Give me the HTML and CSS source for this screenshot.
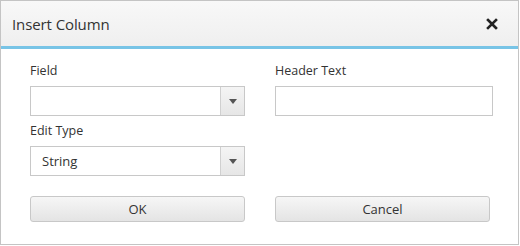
FILE: index.html
```html
<!DOCTYPE html>
<html>
<head>
<meta charset="utf-8">
<link rel="stylesheet" href="styles.css">
</head>
<body>
<div class="dialog">
  <div class="header">
    <span class="title">Insert Column</span>
    <span class="close">
      <svg width="12" height="12" viewBox="0 0 12 12"><path d="M2 2 L10 10 M10 2 L2 10" stroke="#222" stroke-width="2.6" stroke-linecap="square"/></svg>
    </span>
  </div>
  <div class="content">
    <div class="grid">
      <div class="group">
        <div class="label">Field</div>
        <div class="select"><span class="value"></span><span class="arrow"><i class="tri"></i></span></div>
      </div>
      <div class="group">
        <div class="label">Header Text</div>
        <div class="textbox"></div>
      </div>
      <div class="group second">
        <div class="label">Edit Type</div>
        <div class="select"><span class="value">String</span><span class="arrow"><i class="tri"></i></span></div>
      </div>
      <div class="group second"></div>
    </div>
    <div class="buttons">
      <button class="btn">OK</button>
      <button class="btn">Cancel</button>
    </div>
  </div>
</div>
</body>
</html>
```
FILE: styles.css
```css
* { box-sizing: border-box; }
body {
  margin: 0;
  font-family: "Open Sans", "Noto Sans", sans-serif;
  color: #333;
  background: #fff;
}
.dialog {
  width: 519px;
  height: 245px;
  border: 1px solid #c4c4c4;
  background: #fff;
}
.header {
  height: 48px;
  border-bottom: 3px solid #78c4e6;
  background: linear-gradient(#f8f8f8, #efefef);
  display: flex;
  align-items: center;
  justify-content: space-between;
  padding: 0 20px 0 11px;
}
.title {
  font-size: 15px;
  color: #333;
  letter-spacing: -0.1px;
}
.close {
  display: flex;
  width: 12px;
  height: 12px;
}
.content {
  padding: 13px 0 0 29px;
}
.grid {
  display: grid;
  grid-template-columns: 215px 218px;
  column-gap: 30px;
}
.group.second {
  margin-top: 6px;
}
.label {
  font-size: 12.5px;
  line-height: 18px;
  height: 18px;
  margin-bottom: 6px;
  color: #333;
}
.select, .textbox {
  height: 30px;
  border: 1px solid #c8c8c8;
  background: #fff;
  display: flex;
}
.select .value {
  flex: 1;
  font-size: 13px;
  line-height: 28px;
  padding-left: 11px;
  color: #333;
}
.select .arrow {
  width: 24px;
  border-left: 1px solid #d0d0d0;
  background: linear-gradient(#f4f4f4, #e6e6e6);
  display: flex;
  align-items: center;
  justify-content: center;
}
.tri {
  width: 0;
  height: 0;
  border-left: 4.5px solid transparent;
  border-right: 4.5px solid transparent;
  border-top: 5px solid #555;
}
.buttons {
  display: grid;
  grid-template-columns: 215px 215px;
  column-gap: 30px;
  margin-top: 20px;
}
.btn {
  height: 26px;
  border: 1px solid #c8c8c8;
  border-radius: 3px;
  background: linear-gradient(#f6f6f6, #e4e4e4);
  font-family: "Open Sans", "Noto Sans", sans-serif;
  font-size: 13px;
  color: #333;
  padding: 0;
}
```
